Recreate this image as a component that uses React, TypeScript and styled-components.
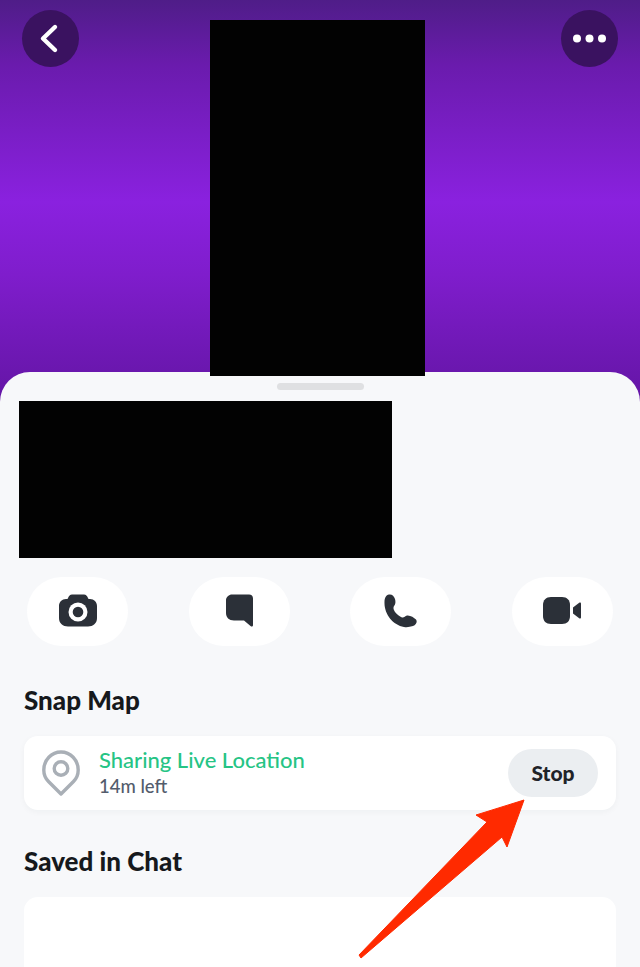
import React from 'react';
import styled, { createGlobalStyle } from 'styled-components';

const GlobalStyle = createGlobalStyle`
    html, body {
        margin: 0;
        padding: 0;
        background: #f7f8fa;
    }
    * {
        box-sizing: border-box;
    }
`

const Page = styled.div`
    position: relative;
    width: 640px;
    height: 967px;
    overflow: hidden;
    font-family: "Lato", "Noto Sans", sans-serif;
`
const Hero = styled.div`
    height: 404px;
    padding: 10px 22px 0;
    display: flex;
    justify-content: space-between;
    align-items: flex-start;
    background: linear-gradient(180deg, #4f1d88 0%, #6a1bad 16%, #8a21df 50%, #7f1dcc 68%, #6315a4 100%);
`
const RoundButton = styled.button`
    width: 57px;
    height: 57px;
    padding: 0;
    border: none;
    border-radius: 50%;
    background: #3a1260;
    display: flex;
    align-items: center;
    justify-content: center;
`
const HiddenPhoto = styled.div`
    position: absolute;
    left: 210px;
    top: 20px;
    width: 215px;
    height: 356px;
    background: #020202;
    z-index: 2;
`
const Sheet = styled.div`
    position: relative;
    margin-top: -32px;
    height: 595px;
    padding: 11px 24px 0;
    background: #f7f8fa;
    border-radius: 30px 30px 0 0;
`
const Handle = styled.div`
    width: 87px;
    height: 7px;
    margin: 0 auto 11px;
    border-radius: 4px;
    background: #dfe0e2;
`
const HiddenName = styled.div`
    width: 373px;
    height: 157px;
    margin-left: -5px;
    background: #020202;
`
const Actions = styled.div`
    display: flex;
    justify-content: space-between;
    margin: 19px 3px 0;
`
const ActionButton = styled.button`
    width: 101px;
    height: 69px;
    padding: 0 0 2px;
    border: none;
    border-radius: 35px;
    background: #ffffff;
    display: flex;
    align-items: center;
    justify-content: center;
`
const SectionTitle = styled.h2<{ top: number }>`
    margin: ${p => p.top}px 0 0;
    font-size: 26px;
    line-height: 30px;
    font-weight: 900;
    color: #16191c;
`
const Card = styled.div`
    height: 74px;
    margin-top: 21px;
    padding: 0 18px;
    display: flex;
    align-items: center;
    background: #ffffff;
    border-radius: 14px;
    box-shadow: 0 2px 6px rgba(30, 40, 60, 0.04);
`
const CardText = styled.div`
    flex: 1;
    margin-left: 19px;
    display: flex;
    flex-direction: column;
    gap: 2px;
`
const LiveLabel = styled.div`
    font-size: 22px;
    line-height: 24px;
    font-weight: 500;
    color: #26c485;
`
const TimeLabel = styled.div`
    font-size: 18.5px;
    line-height: 24px;
    font-weight: 500;
    color: #535c6c;
`
const StopButton = styled.button`
    width: 90px;
    height: 48px;
    padding: 0 0 2px;
    border: none;
    border-radius: 24px;
    background: #ebeef1;
    font-family: inherit;
    font-size: 21px;
    font-weight: 900;
    color: #1f2328;
`
const EmptyCard = styled.div`
    height: 100px;
    margin-top: 21px;
    background: #ffffff;
    border-radius: 14px;
`
const ArrowOverlay = styled.svg`
    position: absolute;
    left: 0;
    top: 0;
    z-index: 3;
    pointer-events: none;
`

const iconColor = '#2b3038'

const App: React.FC = () => {
    return (
        <Page>
            <GlobalStyle />
            <Hero>
                <RoundButton aria-label="Back">
                    <svg width="57" height="57" viewBox="0 0 57 57">
                        <path d="M33 17 L21 28.5 L33 40" fill="none" stroke="#fff" strokeWidth="4.4" strokeLinecap="round" strokeLinejoin="round" />
                    </svg>
                </RoundButton>
                <RoundButton aria-label="More">
                    <svg width="57" height="57" viewBox="0 0 57 57" fill="#fff">
                        <circle cx="16" cy="28.5" r="4" />
                        <circle cx="28.5" cy="28.5" r="4" />
                        <circle cx="41" cy="28.5" r="4" />
                    </svg>
                </RoundButton>
            </Hero>
            <HiddenPhoto />
            <Sheet>
                <Handle />
                <HiddenName />
                <Actions>
                    <ActionButton aria-label="Camera">
                        <svg width="38" height="33" viewBox="0 0 38 33">
                            <path fill={iconColor} d="M13 0.5 H25 C27 0.5 28 2 29 4 L29.5 5 H31 C35 5 38 8 38 12 V24 C38 29.5 34 32.5 29 32.5 H9 C4 32.5 0 29.5 0 24 V12 C0 8 3 5 7 5 H8.5 L9 4 C10 2 11 0.5 13 0.5 Z" />
                            <circle cx="19" cy="18" r="9.5" fill="#fff" />
                            <circle cx="19" cy="18" r="5.3" fill={iconColor} />
                        </svg>
                    </ActionButton>
                    <ActionButton aria-label="Chat">
                        <svg width="27" height="33" viewBox="0 0 27 33">
                            <path fill={iconColor} d="M6 0.5 H23 C25.5 0.5 27 2 27 4.5 V31 C27 32.5 26 33 24.5 32 L18 26.5 H8 C3 26.5 0 23.5 0 19 V6 C0 3 3 0.5 6 0.5 Z" />
                        </svg>
                    </ActionButton>
                    <ActionButton aria-label="Call">
                        <svg width="33" height="34" viewBox="0 0 33 34">
                            <path fill={iconColor} d="M5 0.5 C8 0 10 2 11 5 C11.8 8 11.5 10 10 12 C9 14 9.5 15.5 11 18 C13 20.5 15.5 22.5 18 23.5 C20 24 21 22 23 21.5 C26 21 30 23.5 32 25.5 C33.5 27.5 32.5 31 29 32 C26 33 23 33.5 20 33 C9 31 0 20 0.5 8 C0.5 4 2 1 5 0.5 Z" />
                        </svg>
                    </ActionButton>
                    <ActionButton aria-label="Video">
                        <svg width="38" height="27" viewBox="0 0 38 27">
                            <path fill={iconColor} d="M8 0 H19 C24 0 27 3 27 8 V19 C27 24 24 27 19 27 H8 C3 27 0 24 0 19 V8 C0 3 3 0 8 0 Z" />
                            <path fill={iconColor} d="M37 5.5 C37.6 5.5 38 6 38 6.5 V20.5 C38 21 37.6 21.5 37 21.5 C36.7 21.5 36.5 21.4 36.2 21.2 L30 16.5 V10.5 L36.2 5.8 C36.5 5.6 36.7 5.5 37 5.5 Z" />
                        </svg>
                    </ActionButton>
                </Actions>
                <SectionTitle top={39}>Snap Map</SectionTitle>
                <Card>
                    <svg width="38" height="46" viewBox="0 0 38 46" fill="none" stroke="#a9afb6" strokeWidth="3.4">
                        <path strokeLinejoin="round" d="M19 44 L6.5 31.5 C3.5 28.5 1.8 24.5 1.8 20 C1.8 10 9.5 2 19 2 C28.5 2 36.2 10 36.2 20 C36.2 24.5 34.5 28.5 31.5 31.5 Z" />
                        <circle cx="19" cy="18.5" r="6.8" strokeWidth="3.4" />
                    </svg>
                    <CardText>
                        <LiveLabel>Sharing Live Location</LiveLabel>
                        <TimeLabel>14m left</TimeLabel>
                    </CardText>
                    <StopButton>Stop</StopButton>
                </Card>
                <SectionTitle top={36}>Saved in Chat</SectionTitle>
                <EmptyCard />
            </Sheet>
            <ArrowOverlay width="640" height="967" viewBox="0 0 640 967">
                <path fill="#ff2a00" stroke="#ff2a00" strokeWidth="1" strokeLinejoin="round" d="M524 800 L476 815 L487 822 L359 955 L361 958 L502 837 L507 847 Z" />
            </ArrowOverlay>
        </Page>
    );
};

export default App;
